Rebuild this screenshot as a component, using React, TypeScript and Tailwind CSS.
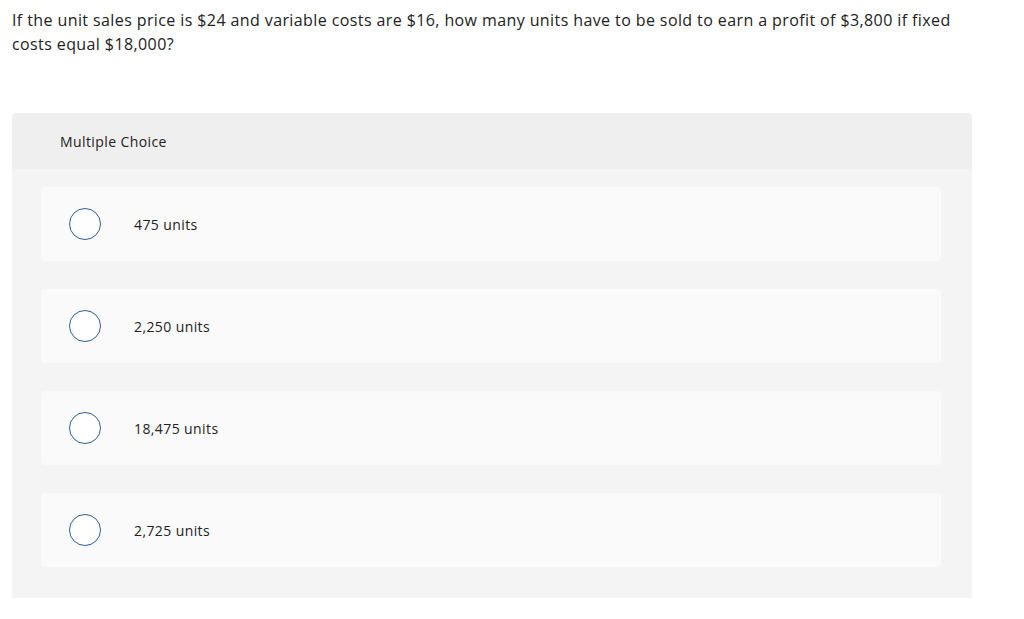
const options = ["475 units", "2,250 units", "18,475 units", "2,725 units"];

const App = () => {
  return (
    <main
      className="w-[1024px] h-[619px] bg-white text-[#222] tracking-[0.025em]"
      style={{ fontFamily: "'Open Sans', 'Liberation Sans', sans-serif" }}
    >
      <p className="pl-3 pr-[60px] pt-[8px] text-[16px] leading-[24px] text-[#222]">
        If the unit sales price is $24 and variable costs are $16, how many
        units have to be sold to earn a profit of $3,800 if fixed costs equal
        $18,000?
      </p>
      <section className="ml-3 mt-[57px] w-[960px] rounded-t-[4px] bg-[#f4f4f4] pb-[31px]">
        <div className="flex h-[56px] items-center rounded-t-[4px] bg-[#efefef] pl-12 text-[14px] text-[#222]">
          Multiple Choice
        </div>
        <div className="mt-[18px] flex flex-col gap-[28px] pl-[29px] pr-[31px]">
          {options.map((opt) => (
            <div
              key={opt}
              className="flex h-[74px] items-center rounded-[4px] bg-[#fafafa]"
            >
              <span className="ml-[28px] h-[32px] w-[32px] rounded-full border-[1.5px] border-[#2a5f95] bg-white" />
              <span className="ml-[33px] text-[14px] text-[#222]">{opt}</span>
            </div>
          ))}
        </div>
      </section>
    </main>
  );
};

export default App;
